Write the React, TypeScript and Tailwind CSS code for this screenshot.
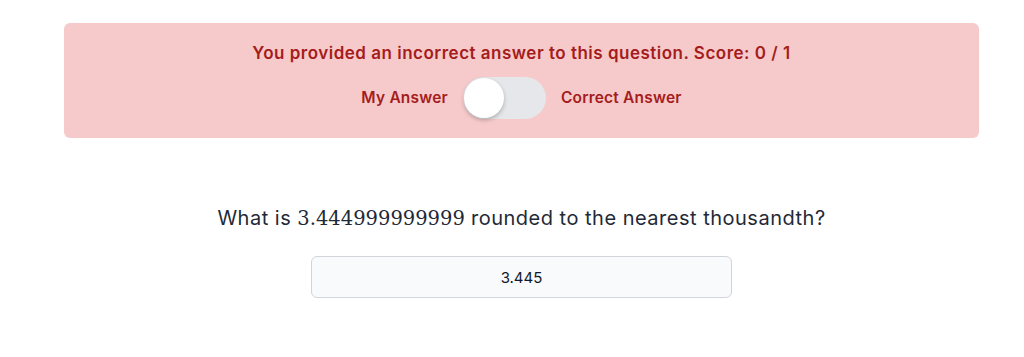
import { useState } from "react";

export default function App() {
  const [showCorrect, setShowCorrect] = useState(false);

  return (
    <div className="min-h-[357px] bg-white font-['Inter',sans-serif] text-[#1f2937]">
      <div className="ml-[64px] mr-[45px] pt-[23px]">
        <div className="flex flex-col items-center gap-[12px] rounded-md bg-[#f6cacb] pt-[18px] pb-[19px] text-[#a51c1c]">
          <p className="text-[17px] leading-6 font-semibold tracking-[0.5px]">
            You provided an incorrect answer to this question. Score: 0 / 1
          </p>
          <div className="flex items-center gap-[15px] text-[15.5px] font-semibold tracking-[0.2px]">
            <span>My Answer</span>
            <button
              type="button"
              onClick={() => setShowCorrect((v) => !v)}
              className="relative h-[42px] w-[83px] rounded-full bg-[#e5e7eb]"
            >
              <span
                className={`absolute top-[1px] h-[40px] w-[40px] rounded-full bg-white shadow-[0_2px_4px_rgba(0,0,0,0.25)] ${
                  showCorrect ? "left-[42px]" : "left-[1px]"
                }`}
              />
            </button>
            <span>Correct Answer</span>
          </div>
        </div>

        <div className="mt-[64px] flex flex-col items-center gap-[21px]">
          <p className="text-[20px] leading-8 tracking-[0.5px]">
            What is{" "}
            <span className="font-['DejaVu_Serif',serif] text-[19.5px] tracking-normal">3.444999999999</span>{" "}
            rounded to the nearest thousandth?
          </p>
          <input
            readOnly
            value="3.445"
            className="h-[42px] w-[421px] rounded-md border border-[#d1d5db] bg-[#f9fafb] text-center text-[15px] text-[#111827]"
          />
        </div>
      </div>
    </div>
  );
}
